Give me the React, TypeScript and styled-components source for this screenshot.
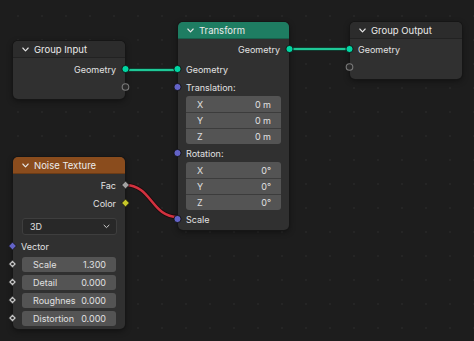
import React from 'react'
import styled, { createGlobalStyle } from 'styled-components'

const GlobalStyle = createGlobalStyle`
  html, body {
    margin: 0;
    padding: 0;
    background: #1d1d1d;
  }
  body {
    font-family: Inter, "DejaVu Sans", sans-serif;
    -webkit-font-smoothing: antialiased;
  }
`

type SocketKind = 'geometry' | 'vector' | 'empty' | 'float' | 'color' | 'vectorDiamond' | 'field'

const SOCKET_COLOR: Record<SocketKind, string> = {
  geometry: '#00d6a3',
  vector: '#6363c7',
  empty: '#333333',
  float: '#a1a1a1',
  color: '#c7c729',
  vectorDiamond: '#6363c7',
  field: '#a1a1a1',
}

const Socket: React.FC<{ kind: SocketKind }> = ({ kind }) => {
  const color = SOCKET_COLOR[kind]
  if (kind === 'geometry' || kind === 'vector') {
    return (
      <svg width="9" height="9" viewBox="0 0 9 9">
        <circle cx="4.5" cy="4.5" r="3.6" fill={color} stroke="#111" strokeWidth="0.9" />
      </svg>
    )
  }
  if (kind === 'empty') {
    return (
      <svg width="9" height="9" viewBox="0 0 9 9">
        <circle cx="4.5" cy="4.5" r="3.3" fill="#2a2a2a" stroke="#7a7a7a" strokeWidth="1.1" />
      </svg>
    )
  }
  if (kind === 'field') {
    return (
      <svg width="9" height="9" viewBox="0 0 9 9">
        <path d="M4.5 0.6 L8.4 4.5 L4.5 8.4 L0.6 4.5 Z" fill="#c8c8c8" stroke="#111" strokeWidth="0.7" />
        <circle cx="4.5" cy="4.5" r="1.3" fill="#2a2a2a" />
      </svg>
    )
  }
  return (
    <svg width="9" height="9" viewBox="0 0 9 9">
      <path d="M4.5 0.6 L8.4 4.5 L4.5 8.4 L0.6 4.5 Z" fill={color} stroke="#111" strokeWidth="0.8" />
    </svg>
  )
}

const Chevron: React.FC = () => (
  <svg width="7" height="5" viewBox="0 0 7 5">
    <path d="M0.8 1 L3.5 3.8 L6.2 1" fill="none" stroke="#e6e6e6" strokeWidth="1.1" strokeLinecap="round" strokeLinejoin="round" />
  </svg>
)

const Canvas = styled.div`
  position: relative;
  width: 474px;
  height: 341px;
  overflow: hidden;
  background-color: #1d1d1d;
  background-image: radial-gradient(circle, #252525 0.9px, transparent 1.3px);
  background-size: 24px 24px;
  background-position: 6px 4px;
`

const Links = styled.svg`
  position: absolute;
  left: 0;
  top: 0;
`

type NodeBoxProps = {
  readonly $x: number
  readonly $y: number
  readonly $w: number
}

const NodeBox = styled.div<NodeBoxProps>`
  position: absolute;
  left: ${props => props.$x}px;
  top: ${props => props.$y}px;
  width: ${props => props.$w}px;
  background: #303030;
  border-radius: 5px;
  box-shadow: 0 0 0 1px #161616, 0 2px 6px rgba(0, 0, 0, 0.45);
  color: #e2e2e2;
  font-size: 9px;
`

type HeaderProps = {
  readonly $color: string
}

const Header = styled.div<HeaderProps>`
  height: 17px;
  display: flex;
  align-items: center;
  gap: 5px;
  padding-left: 9px;
  background: ${props => props.$color};
  border-radius: 5px 5px 0 0;
  border-bottom: 1px solid rgba(0, 0, 0, 0.22);
  box-sizing: border-box;
  color: #ebebeb;
  font-size: 9.5px;
`

type BodyProps = {
  readonly $top: number
  readonly $bottom: number
}

const Body = styled.div<BodyProps>`
  display: flex;
  flex-direction: column;
  padding: ${props => props.$top}px 0 ${props => props.$bottom}px;
`

type RowProps = {
  readonly $out?: boolean
  readonly $gap?: number
}

const Row = styled.div<RowProps>`
  position: relative;
  height: 18px;
  display: flex;
  align-items: center;
  justify-content: ${props => props.$out ? 'flex-end' : 'flex-start'};
  padding: 0 9px 0 8px;
  margin-top: ${props => props.$gap || 0}px;
`

type SocketPinProps = {
  readonly $out?: boolean
}

const SocketPin = styled.span<SocketPinProps>`
  position: absolute;
  top: 50%;
  ${props => props.$out ? 'right: -5px;' : 'left: -5px;'}
  width: 9px;
  height: 9px;
  transform: translateY(-50%);
  display: flex;
`

const FieldStack = styled.div`
  margin: 0 8px;
  border-radius: 3px;
  overflow: hidden;
  display: flex;
  flex-direction: column;
`

const StackField = styled.div`
  height: 16px;
  display: flex;
  align-items: center;
  justify-content: space-between;
  padding: 0 10px 0 11px;
  background: #545454;
  color: #e0e0e0;
  & + & {
    border-top: 1px solid #3c3c3c;
    height: 15px;
  }
`

const ValueField = styled.div`
  flex: 1;
  height: 15px;
  display: flex;
  align-items: center;
  justify-content: space-between;
  padding: 0 10px 0 11px;
  margin-left: 1px;
  background: #545454;
  border-radius: 3px;
  color: #e0e0e0;
`

const Dropdown = styled.div`
  margin: 6px 8px 2px 9px;
  height: 15px;
  display: flex;
  align-items: center;
  justify-content: space-between;
  padding: 0 6px 0 7px;
  background: #282828;
  border: 1px solid #3e3e3e;
  border-radius: 3px;
  color: #e0e0e0;
`

type NodeProps = {
  readonly title: string
  readonly color: string
  readonly x: number
  readonly y: number
  readonly w: number
  readonly top?: number
  readonly bottom?: number
  readonly children: React.ReactNode
}

const Node: React.FC<NodeProps> = ({ title, color, x, y, w, top = 1, bottom = 3, children }) => (
  <NodeBox $x={x} $y={y} $w={w}>
    <Header $color={color}>
      <Chevron />
      {title}
    </Header>
    <Body $top={top} $bottom={bottom}>{children}</Body>
  </NodeBox>
)

type SocketRowProps = {
  readonly label?: string
  readonly kind: SocketKind
  readonly out?: boolean
  readonly gap?: number
  readonly children?: React.ReactNode
}

const SocketRow: React.FC<SocketRowProps> = ({ label, kind, out, gap, children }) => (
  <Row $out={out} $gap={gap}>
    {children || label}
    <SocketPin $out={out}>
      <Socket kind={kind} />
    </SocketPin>
  </Row>
)

const noiseInputs = [
  { name: 'Scale', value: '1.300' },
  { name: 'Detail', value: '0.000' },
  { name: 'Roughnes', value: '0.000' },
  { name: 'Distortion', value: '0.000' },
]

const App: React.FC = () => (
  <>
    <GlobalStyle />
    <Canvas>
      <Links width="474" height="341">
        <path d="M125 70 L178 70" stroke="#0e0e0e" strokeWidth="4" />
        <path d="M125 70 L178 70" stroke="#1fc897" strokeWidth="2.4" />
        <path d="M289 49 L350 49" stroke="#0e0e0e" strokeWidth="4" />
        <path d="M289 49 L350 49" stroke="#1fc897" strokeWidth="2.4" />
        <path d="M125 185 C152 185 151 217 178 217" fill="none" stroke="#1a0a0c" strokeWidth="4.2" />
        <path d="M125 185 C152 185 151 217 178 217" fill="none" stroke="#d2323f" strokeWidth="2.6" />
      </Links>

      <Node title="Group Input" color="#2c2c2c" x={13} y={41} w={112} top={2} bottom={3}>
        <SocketRow label="Geometry" kind="geometry" out />
        <SocketRow kind="empty" out />
      </Node>

      <Node title="Transform" color="#1e7d62" x={178} y={22} w={111} top={1} bottom={2}>
        <SocketRow label="Geometry" kind="geometry" out />
        <SocketRow label="Geometry" kind="geometry" gap={2} />
        <SocketRow label="Translation:" kind="vector" />
        <FieldStack>
          <StackField><span>X</span><span>0 m</span></StackField>
          <StackField><span>Y</span><span>0 m</span></StackField>
          <StackField><span>Z</span><span>0 m</span></StackField>
        </FieldStack>
        <SocketRow label="Rotation:" kind="vector" />
        <FieldStack>
          <StackField><span>X</span><span>0°</span></StackField>
          <StackField><span>Y</span><span>0°</span></StackField>
          <StackField><span>Z</span><span>0°</span></StackField>
        </FieldStack>
        <SocketRow label="Scale" kind="vector" />
      </Node>

      <Node title="Group Output" color="#2c2c2c" x={350} y={22} w={112} top={1} bottom={3}>
        <SocketRow label="Geometry" kind="geometry" />
        <SocketRow kind="empty" />
      </Node>

      <Node title="Noise Texture" color="#8a4c1d" x={13} y={157} w={112} top={2} bottom={2}>
        <SocketRow label="Fac" kind="float" out />
        <SocketRow label="Color" kind="color" out />
        <Dropdown>
          <span>3D</span>
          <svg width="7" height="5" viewBox="0 0 7 5">
            <path d="M1 1.2 L3.5 3.6 L6 1.2" fill="none" stroke="#cfcfcf" strokeWidth="1" strokeLinecap="round" />
          </svg>
        </Dropdown>
        <SocketRow label="Vector" kind="vectorDiamond" />
        {noiseInputs.map(input => (
          <SocketRow key={input.name} kind="field">
            <ValueField>
              <span>{input.name}</span>
              <span>{input.value}</span>
            </ValueField>
          </SocketRow>
        ))}
      </Node>
    </Canvas>
  </>
)

export default App
